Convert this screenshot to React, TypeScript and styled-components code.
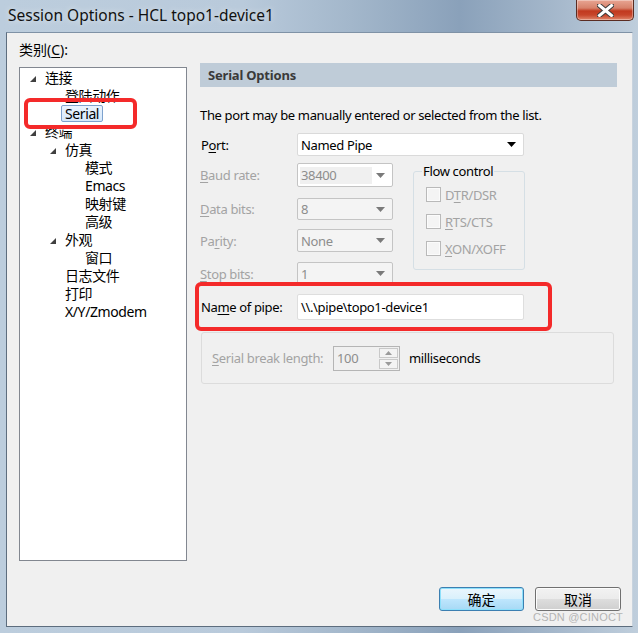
import React from 'react';
import styled, { createGlobalStyle } from 'styled-components';

const UI = `"Noto Sans", "Noto Sans CJK SC", sans-serif`;

const GlobalStyle = createGlobalStyle`
  html, body { margin: 0; padding: 0; width: 638px; height: 633px; overflow: hidden; }
  body { font-family: ${UI}; font-size: 13px; color: #000; letter-spacing: -0.35px; }
  * { box-sizing: border-box; }
`;

const Window = styled.div`
  position: relative;
  width: 638px;
  height: 633px;
  display: flex;
  flex-direction: column;
  background: linear-gradient(90deg, #bccddd 0%, #b9cadb 38%, #a3b7cb 55%, #8aa1ba 72%, #a3b6ca 86%, #bfcedc 100%);
`;

const TitleBar = styled.div`
  height: 32px;
  display: flex;
  align-items: flex-start;
  padding-left: 8px;
`;

const TitleText = styled.div`
  margin-top: 5px;
  font-family: ${UI};
  font-size: 15.5px;
  letter-spacing: 0;
  line-height: 20px;
  color: #111;
  text-shadow: 0 0 6px rgba(255, 255, 255, 0.7);
  flex: 1;
`;

const CloseButton = styled.div`
  width: 58px;
  height: 21px;
  margin-right: 4px;
  border: 1px solid #5a2c22;
  border-top: none;
  border-radius: 0 0 5px 5px;
  background: linear-gradient(180deg, #e8a593 0%, #d7826b 40%, #c1391f 55%, #c7452a 75%, #e0876c 100%);
  display: flex;
  align-items: center;
  justify-content: center;
  box-shadow: inset 0 0 0 1px rgba(255, 255, 255, 0.35);
`;

const Client = styled.div`
  flex: 1;
  margin: 0 5px 6px 6px;
  border: 1px solid #5d6d7e;
  border-top-color: #7f92a6;
  border-right-color: #c8d3de;
  background: #f0f0f0;
  display: flex;
  flex-direction: column;
`;

const Main = styled.div`
  flex: 1;
  display: flex;
  align-items: flex-start;
  padding-left: 12px;
`;

const LeftCol = styled.div`
  margin-top: 8px;
  display: flex;
  flex-direction: column;
`;

const CategoryLabel = styled.div`
  height: 18px;
  line-height: 18px;
  font-size: 14px;
  letter-spacing: 0;
`;

const Mn = styled.span`
  text-decoration: underline;
  text-underline-offset: 2px;
`;

const TreeBox = styled.div`
  margin-top: 8px;
  width: 168px;
  height: 494px;
  background: #fff;
  border: 1px solid #828790;
`;

const TreeRow = styled.div<{ $level: number }>`
  height: 18px;
  display: flex;
  align-items: center;
  padding-left: ${(p) => 10 + p.$level * 20}px;
  font-size: 14px;
  letter-spacing: -0.4px;
  white-space: nowrap;
`;

const Expander = styled.span<{ $show: boolean }>`
  width: 15px;
  height: 18px;
  display: flex;
  align-items: center;
  padding-top: 3px;
  visibility: ${(p) => (p.$show ? 'visible' : 'hidden')};
`;

const TreeLabel = styled.span<{ $selected?: boolean }>`
  line-height: 15px;
  padding: 0 3px;
  margin-left: -4px;
  border: 1px solid ${(p) => (p.$selected ? '#7da2ce' : 'transparent')};
  border-radius: 2px;
  background: ${(p) => (p.$selected ? 'linear-gradient(180deg, #eaf3fd 0%, #d6e8fb 100%)' : 'transparent')};
`;

const RightCol = styled.div`
  margin-top: 30px;
  margin-left: 13px;
  width: 417px;
  display: flex;
  flex-direction: column;
`;

const Header = styled.div`
  height: 24px;
  line-height: 24px;
  padding-left: 8px;
  background: #bfccd8;
  font-weight: 700;
  font-size: 13px;
  letter-spacing: -0.2px;
  color: #3a3a3a;
`;

const Intro = styled.div`
  margin-top: 20px;
  line-height: 16px;
`;

const Row = styled.div<{ $mt?: number; $h?: number }>`
  display: flex;
  align-items: center;
  margin-top: ${(p) => p.$mt ?? 0}px;
  height: ${(p) => p.$h ?? 23}px;
  flex: none;
`;

const Label = styled.div<{ $disabled?: boolean; $indent?: number }>`
  width: 97px;
  padding-left: ${(p) => p.$indent ?? 0}px;
  color: ${(p) => (p.$disabled ? '#a3a3a3' : '#000')};
  white-space: nowrap;
`;

const Combo = styled.div<{ $w: number; $enabled?: boolean }>`
  width: ${(p) => p.$w}px;
  height: 100%;
  display: flex;
  align-items: center;
  border: 1px solid ${(p) => (p.$enabled ? '#dadada' : '#c4c4c4')};
  border-radius: 2px;
  background: ${(p) => (p.$enabled ? '#fff' : '#f4f4f4')};
  color: ${(p) => (p.$enabled ? '#000' : '#8d8d8d')};
  padding-left: 3px;
`;

const EditCombo = styled(Combo)`
  background: #fff;
  padding-left: 2px;
`;

const ComboEdit = styled.div`
  width: 72px;
  height: 17px;
  line-height: 17px;
  background: #f0f0f0;
  padding-left: 1px;
  color: #8d8d8d;
`;

const ComboText = styled.span`
  flex: 1;
`;

const Arrow = styled.svg`
  margin-right: 7px;
  flex: none;
`;

const Fields = styled.div`
  margin-top: 7px;
  display: flex;
  align-items: flex-start;
`;

const FieldStack = styled.div`
  display: flex;
  flex-direction: column;
  height: 122px;
  overflow: hidden;
`;

const GroupBox = styled.fieldset`
  margin: 2px 0 0 20px;
  width: 112px;
  height: 105px;
  padding: 0 0 0 8px;
  border: 1px solid #d5dfe5;
  border-radius: 3px;
  display: flex;
  flex-direction: column;
`;

const Legend = styled.legend`
  padding: 0 1px;
  line-height: 12px;
  font-size: 13px;
  color: #000;
`;

const CheckList = styled.div`
  margin-top: 10px;
  padding-left: 4px;
  display: flex;
  flex-direction: column;
  gap: 12px;
`;

const CheckRow = styled.div`
  display: flex;
  align-items: center;
  gap: 4px;
  height: 15px;
  color: #a3a3a3;
`;

const CheckBox = styled.span`
  width: 15px;
  height: 15px;
  border: 1px solid #b9b9b9;
  background: #f4f4f4;
  box-shadow: inset 0 0 0 1px #fbfbfb;
  flex: none;
`;

const TextInput = styled.div`
  width: 227px;
  height: 100%;
  border: 1px solid #dedede;
  border-radius: 2px;
  background: #fff;
  padding-left: 3px;
  display: flex;
  align-items: center;
`;

const BreakGroup = styled.div`
  margin: 12px 0 0 1px;
  width: 413px;
  height: 52px;
  border: 1px solid #dcdcdc;
  border-radius: 3px;
  display: flex;
  align-items: center;
  padding-left: 10px;
`;

const BreakLabel = styled.div`
  width: 121px;
  color: #a3a3a3;
  white-space: nowrap;
`;

const Spinner = styled.div`
  width: 67px;
  height: 25px;
  border: 1px solid #b5b5b5;
  display: flex;
  align-items: center;
  background: #f0f0f0;
`;

const SpinText = styled.span`
  flex: 1;
  padding-left: 3px;
  color: #8d8d8d;
`;

const SpinButtons = styled.div`
  width: 20px;
  height: 100%;
  display: flex;
  flex-direction: column;
  padding: 1px 1px 1px 0;
  gap: 1px;
`;

const SpinBtn = styled.div`
  flex: 1;
  border: 1px solid #c9c9c9;
  background: #f3f3f3;
  display: flex;
  align-items: center;
  justify-content: center;
`;

const Unit = styled.span`
  margin-left: 9px;
`;

const Footer = styled.div`
  display: flex;
  justify-content: flex-end;
  gap: 11px;
  padding-right: 11px;
  margin-bottom: 15px;
`;

const Button = styled.div<{ $default?: boolean }>`
  width: ${(p) => (p.$default ? 85 : 86)}px;
  height: 24px;
  border: 1px solid ${(p) => (p.$default ? '#3c7fb1' : '#707070')};
  border-radius: 3px;
  display: flex;
  align-items: center;
  justify-content: center;
  font-size: 14px;
  letter-spacing: 0;
  background: ${(p) =>
    p.$default
      ? 'linear-gradient(180deg, #eaf6fd 0%, #d9f0fc 50%, #bee6fd 51%, #a7d9f5 100%)'
      : 'linear-gradient(180deg, #f2f2f2 0%, #ebebeb 50%, #dddddd 51%, #cfcfcf 100%)'};
  box-shadow: ${(p) => (p.$default ? 'inset 0 0 0 1px #8de0fb' : 'inset 0 0 0 1px #fcfcfc')};
`;

const RedMark = styled.div<{ $x: number; $y: number; $w: number; $h: number }>`
  position: absolute;
  left: ${(p) => p.$x}px;
  top: ${(p) => p.$y}px;
  width: ${(p) => p.$w}px;
  height: ${(p) => p.$h}px;
  border: 4px solid #f42a2a;
  border-radius: 6px;
  pointer-events: none;
`;

const Watermark = styled.div`
  position: absolute;
  right: 15px;
  top: 611px;
  font-family: "Liberation Sans", Arial, sans-serif;
  font-size: 11px;
  color: #b4b4b4;
  letter-spacing: 0.2px;
`;

const DownArrow = ({ color }: { color: string }) => (
  <Arrow width="9" height="5" viewBox="0 0 9 5">
    <polygon points="0,0 9,0 4.5,5" fill={color} />
  </Arrow>
);

const Tri = () => (
  <svg width="6" height="6" viewBox="0 0 6 6">
    <polygon points="6,0 6,6 0,6" fill="#404040" />
  </svg>
);

type Node = { label: React.ReactNode; level: number; expanded?: boolean; selected?: boolean };

const tree: Node[] = [
  { label: '连接', level: 0, expanded: true },
  { label: '登陆动作', level: 1 },
  { label: 'Serial', level: 1, selected: true },
  { label: '终端', level: 0, expanded: true },
  { label: '仿真', level: 1, expanded: true },
  { label: '模式', level: 2 },
  { label: 'Emacs', level: 2 },
  { label: '映射键', level: 2 },
  { label: '高级', level: 2 },
  { label: '外观', level: 1, expanded: true },
  { label: '窗口', level: 2 },
  { label: '日志文件', level: 1 },
  { label: '打印', level: 1 },
  { label: 'X/Y/Zmodem', level: 1 },
];

export default function App() {
  return (
    <>
      <GlobalStyle />
      <Window>
        <TitleBar>
          <TitleText>Session Options - HCL topo1-device1</TitleText>
          <CloseButton>
            <svg width="17" height="13" viewBox="0 0 17 13">
              <path d="M2.5 1.5 L14.5 11.5 M14.5 1.5 L2.5 11.5" stroke="#3b3b3b" strokeWidth="5" strokeLinecap="square" />
              <path d="M2.5 1.5 L14.5 11.5 M14.5 1.5 L2.5 11.5" stroke="#fff" strokeWidth="3" strokeLinecap="square" />
            </svg>
          </CloseButton>
        </TitleBar>
        <Client>
          <Main>
            <LeftCol>
              <CategoryLabel>
                类别(<Mn>C</Mn>):
              </CategoryLabel>
              <TreeBox>
                {tree.map((n, i) => (
                  <TreeRow key={i} $level={n.level}>
                    <Expander $show={!!n.expanded}>
                      <Tri />
                    </Expander>
                    <TreeLabel $selected={n.selected}>{n.label}</TreeLabel>
                  </TreeRow>
                ))}
              </TreeBox>
            </LeftCol>
            <RightCol>
              <Header>Serial Options</Header>
              <Intro>The port may be manually entered or selected from the list.</Intro>
              <Row $mt={10} $h={23}>
                <Label $indent={1}>
                  P<Mn>o</Mn>rt:
                </Label>
                <Combo $w={227} $enabled>
                  <ComboText>Named Pipe</ComboText>
                  <DownArrow color="#000" />
                </Combo>
              </Row>
              <Fields>
                <FieldStack>
                  <Row $h={24}>
                    <Label $disabled>
                      <Mn>B</Mn>aud rate:
                    </Label>
                    <EditCombo $w={96}>
                      <ComboEdit>38400</ComboEdit>
                      <ComboText />
                      <DownArrow color="#7a7a7a" />
                    </EditCombo>
                  </Row>
                  <Row $mt={11} $h={22}>
                    <Label $disabled>
                      <Mn>D</Mn>ata bits:
                    </Label>
                    <Combo $w={96}>
                      <ComboText>8</ComboText>
                      <DownArrow color="#7a7a7a" />
                    </Combo>
                  </Row>
                  <Row $mt={9} $h={23}>
                    <Label $disabled>
                      Pa<Mn>r</Mn>ity:
                    </Label>
                    <Combo $w={96}>
                      <ComboText>None</ComboText>
                      <DownArrow color="#7a7a7a" />
                    </Combo>
                  </Row>
                  <Row $mt={10} $h={23}>
                    <Label $disabled>
                      <Mn>S</Mn>top bits:
                    </Label>
                    <Combo $w={96}>
                      <ComboText>1</ComboText>
                      <DownArrow color="#7a7a7a" />
                    </Combo>
                  </Row>
                </FieldStack>
                <GroupBox>
                  <Legend>Flow control</Legend>
                  <CheckList>
                    <CheckRow>
                      <CheckBox />
                      <span>
                        D<Mn>T</Mn>R/DSR
                      </span>
                    </CheckRow>
                    <CheckRow>
                      <CheckBox />
                      <span>
                        <Mn>R</Mn>TS/CTS
                      </span>
                    </CheckRow>
                    <CheckRow>
                      <CheckBox />
                      <span>
                        <Mn>X</Mn>ON/XOFF
                      </span>
                    </CheckRow>
                  </CheckList>
                </GroupBox>
              </Fields>
              <Row $mt={9} $h={26}>
                <Label $indent={1}>
                  Na<Mn>m</Mn>e of pipe:
                </Label>
                <TextInput>\\.\pipe\topo1-device1</TextInput>
              </Row>
              <BreakGroup>
                <BreakLabel>
                  <Mn>S</Mn>erial break length:
                </BreakLabel>
                <Spinner>
                  <SpinText>100</SpinText>
                  <SpinButtons>
                    <SpinBtn>
                      <svg width="7" height="4" viewBox="0 0 7 4">
                        <polygon points="0,4 7,4 3.5,0" fill="#9a9a9a" />
                      </svg>
                    </SpinBtn>
                    <SpinBtn>
                      <svg width="7" height="4" viewBox="0 0 7 4">
                        <polygon points="0,0 7,0 3.5,4" fill="#9a9a9a" />
                      </svg>
                    </SpinBtn>
                  </SpinButtons>
                </Spinner>
                <Unit>milliseconds</Unit>
              </BreakGroup>
            </RightCol>
          </Main>
          <Footer>
            <Button $default>确定</Button>
            <Button>取消</Button>
          </Footer>
        </Client>
        <RedMark $x={24} $y={98} $w={113} $h={31} />
        <RedMark $x={195} $y={282} $w={357} $h={49} />
        <Watermark>CSDN @CINOCT</Watermark>
      </Window>
    </>
  );
}
